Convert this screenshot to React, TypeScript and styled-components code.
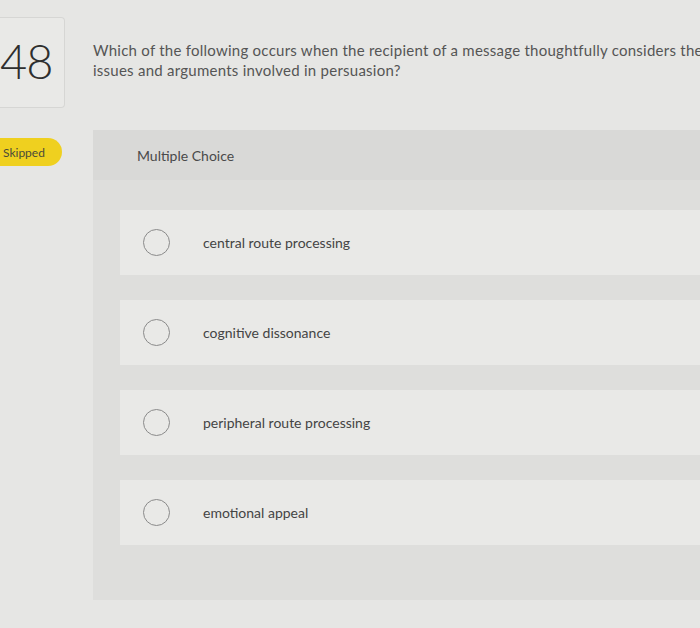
import React from "react";
import styled, { createGlobalStyle } from "styled-components";

const GlobalStyle = createGlobalStyle`
  html, body {
    margin: 0;
    padding: 0;
    background: #e6e6e4;
    overflow: hidden;
  }
  body {
    font-family: Lato, "Open Sans", Arial, sans-serif;
    color: #4a4a4a;
  }
`;

const options = [
  "central route processing",
  "cognitive dissonance",
  "peripheral route processing",
  "emotional appeal",
];

export default function App() {
  return (
    <>
      <GlobalStyle />
      <Page>
        <Row>
          <NumberBox>48</NumberBox>
          <Question>
            <Line>
              Which of the following occurs when the recipient of a message
              thoughtfully considers the
            </Line>
            <Line>issues and arguments involved in persuasion?</Line>
          </Question>
        </Row>
        <BodyRow>
          <Side>
            <Pill>Skipped</Pill>
          </Side>
          <Panel>
            <PanelHeader>Multiple Choice</PanelHeader>
            <OptionList>
              {options.map((label) => (
                <Option key={label}>
                  <Radio />
                  <OptionText>{label}</OptionText>
                </Option>
              ))}
            </OptionList>
          </Panel>
        </BodyRow>
      </Page>
    </>
  );
}

const Page = styled.div`
  width: 700px;
  height: 628px;
  padding-top: 17px;
  box-sizing: border-box;
  overflow: hidden;
`;

const Row = styled.div`
  display: grid;
  grid-template-columns: 93px 1fr;
`;

const NumberBox = styled.div`
  margin-left: -12px;
  width: 77px;
  height: 91px;
  box-sizing: border-box;
  border: 1px solid #d6d6d4;
  border-left: none;
  border-radius: 0 4px 4px 0;
  background: #e9e9e7;
  display: flex;
  align-items: center;
  padding-left: 12px;
  padding-bottom: 4px;
  font-family: Lato, "Open Sans", sans-serif;
  font-weight: 300;
  font-size: 47px;
  color: #2e2e2e;
  letter-spacing: -1px;
`;

const Question = styled.div`
  padding-top: 23px;
  font-size: 15px;
  letter-spacing: 0.25px;
  line-height: 20px;
  color: #555;
  white-space: nowrap;
`;

const Line = styled.div``;

const BodyRow = styled.div`
  display: grid;
  grid-template-columns: 93px 1fr;
  margin-top: 22px;
`;

const Side = styled.div`
  padding-top: 8px;
`;

const Pill = styled.div`
  margin-left: -14px;
  width: 76px;
  height: 28px;
  box-sizing: border-box;
  padding-left: 17px;
  border-radius: 0 14px 14px 0;
  background: #efd01f;
  display: flex;
  align-items: center;
  font-size: 12px;
  color: #4a4a3a;
`;

const Panel = styled.div`
  background: #dededc;
  height: 470px;
`;

const PanelHeader = styled.div`
  height: 50px;
  background: #d9d9d7;
  display: flex;
  align-items: center;
  padding-left: 44px;
  font-size: 14px;
  color: #4a4a4a;
`;

const OptionList = styled.div`
  display: flex;
  flex-direction: column;
  gap: 25px;
  padding: 30px 0 0 27px;
`;

const Option = styled.div`
  height: 65px;
  background: #e9e9e7;
  display: flex;
  align-items: center;
  padding-left: 23px;
  gap: 33px;
`;

const Radio = styled.span`
  width: 27px;
  height: 27px;
  box-sizing: border-box;
  border: 1.5px solid #8a8a8a;
  border-radius: 50%;
  flex-shrink: 0;
`;

const OptionText = styled.span`
  font-size: 14px;
  color: #444;
`;
